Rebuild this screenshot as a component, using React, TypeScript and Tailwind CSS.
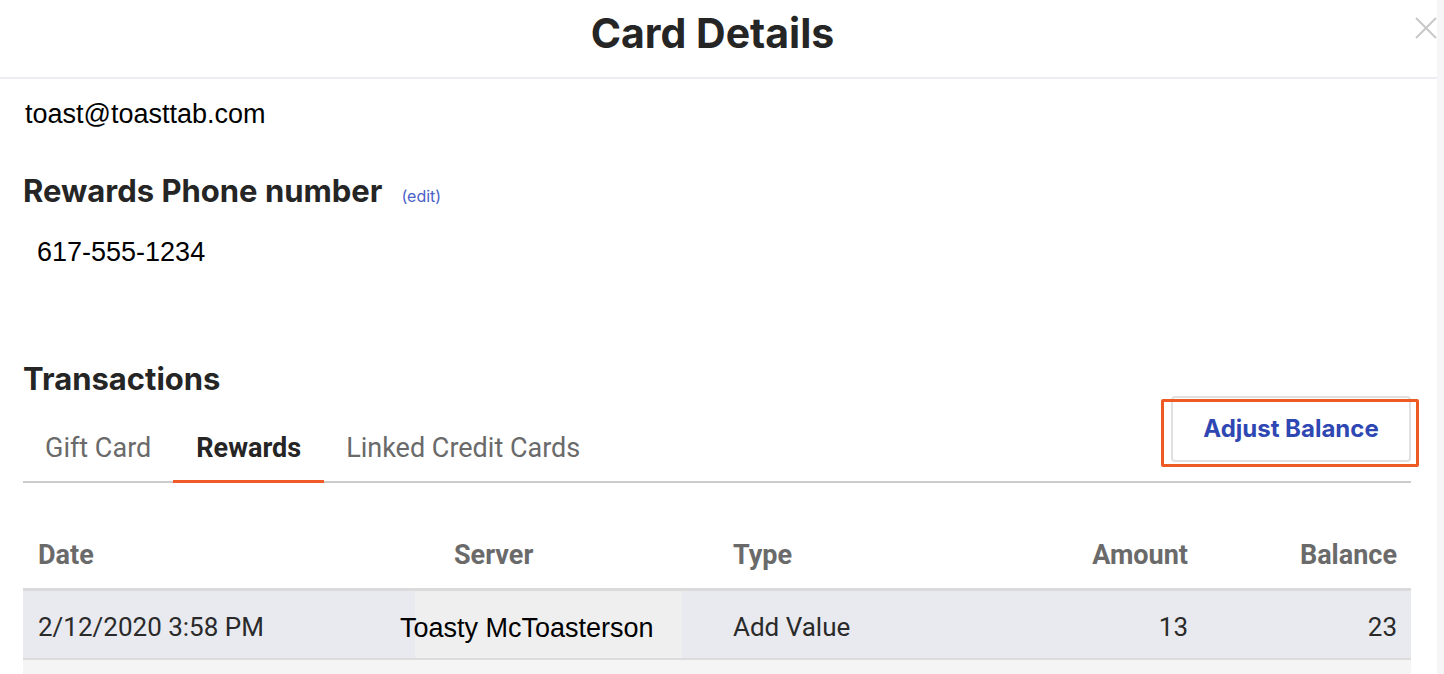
const heading = { fontFamily: "Inter, 'Noto Sans', sans-serif" }
const plain = { fontFamily: "'Liberation Sans', Arial, sans-serif" }
const ui = { fontFamily: "Roboto, 'Noto Sans', sans-serif" }

const tabs = [
  { label: "Gift Card", active: false },
  { label: "Rewards", active: true },
  { label: "Linked Credit Cards", active: false },
]

const cols = "grid grid-cols-[392px_267px_1fr_203px_208px]"

const App = () => {
  return (
    <div className="flex h-[674px] w-[1444px] overflow-hidden bg-white text-[#252525]">
      <div className="flex w-[1437px] flex-col">
        {/* header */}
        <div className="relative flex h-[79px] shrink-0 justify-center border-b-2 border-[#ececf2] pr-[12px] pt-[10px]">
          <h1 style={heading} className="text-[41px] font-bold leading-[46px] text-[#252525]">
            Card Details
          </h1>
          <button className="absolute right-0 top-[17px]">
            <svg width="22" height="22" viewBox="0 0 22 22" fill="none" stroke="#c8c8c8" strokeWidth="2">
              <path d="M1 1L21 21M21 1L1 21" />
            </svg>
          </button>
        </div>

        <div className="flex flex-col px-[23px]">
          <p style={plain} className="ml-[2px] mt-[19px] text-[27px] leading-[32px] text-black">
            toast@toasttab.com
          </p>

          <div className="mt-[43px] flex items-baseline gap-[19px]">
            <h2 style={heading} className="text-[31px] font-bold leading-[35px]">
              Rewards Phone number
            </h2>
            <span style={heading} className="text-[16px] text-[#4a5fc9]">
              (edit)
            </span>
          </div>

          <p style={plain} className="ml-[14px] mt-[28px] text-[27px] leading-[32px] text-black">
            617-555-1234
          </p>

          <h2 style={heading} className="mt-[94px] text-[31px] font-bold leading-[34px]">
            Transactions
          </h2>

          {/* tabs + adjust balance */}
          <div className="flex w-[1388px] items-end justify-between border-b-2 border-[#cbcbcb]">
            <div className="flex">
              {tabs.map((tab) => (
                <div
                  key={tab.label}
                  style={ui}
                  className={
                    tab.active
                      ? "-mb-[2px] border-b-[3px] border-[#f05a28] px-[23px] pb-[16px] text-[27px] font-bold leading-[32px] text-[#252525]"
                      : "-mb-[2px] border-b-[3px] border-transparent px-[22px] pb-[16px] text-[27px] leading-[32px] text-[#6a6a6a]"
                  }
                >
                  {tab.label}
                </div>
              ))}
            </div>
            <div className="relative mb-[19px]">
              <button
                style={heading}
                className="flex h-[66px] w-[240px] items-center justify-center rounded-[4px] border-2 border-[#e0e0e0] bg-white text-[24px] font-bold text-[#2f47b3]"
              >
                Adjust Balance
              </button>
              <div className="absolute -bottom-[5px] -left-[10px] -right-[8px] top-[3px] rounded-[2px] border-[3px] border-[#ee5a24]" />
            </div>
          </div>

          {/* table */}
          <div className="mt-[56px] w-[1388px]">
            <div
              style={ui}
              className={`${cols} border-b-[3px] border-[#dadada] pb-[17px] text-[27px] font-bold leading-[32px] text-[#6a6a6a]`}
            >
              <div className="pl-[15px]">Date</div>
              <div className="pl-[39px]">Server</div>
              <div className="pl-[51px]">Type</div>
              <div className="pr-[15px] text-right">Amount</div>
              <div className="pr-[14px] text-right">Balance</div>
            </div>
            <div className={`${cols} h-[69px] border-b-2 border-[#dcdcdc] bg-[#e9eaef] text-[26px] leading-[32px] text-[#2a2a2a]`}>
              <div style={ui} className="pl-[15px] pt-[20px]">
                2/12/2020 3:58 PM
              </div>
              <div className="bg-[#efefef] pt-[20px]">
                <span style={plain} className="-ml-[15px] text-[27px] text-black">
                  Toasty McToasterson
                </span>
              </div>
              <div style={ui} className="pl-[51px] pt-[20px]">
                Add Value
              </div>
              <div style={ui} className="pr-[15px] pt-[20px] text-right">
                13
              </div>
              <div style={ui} className="pr-[14px] pt-[20px] text-right">
                23
              </div>
            </div>
            <div className="h-[20px] bg-[#f5f5f5]" />
          </div>
        </div>
      </div>
      <div className="w-[7px] bg-[#f6f6f6]" />
    </div>
  )
}

export default App
